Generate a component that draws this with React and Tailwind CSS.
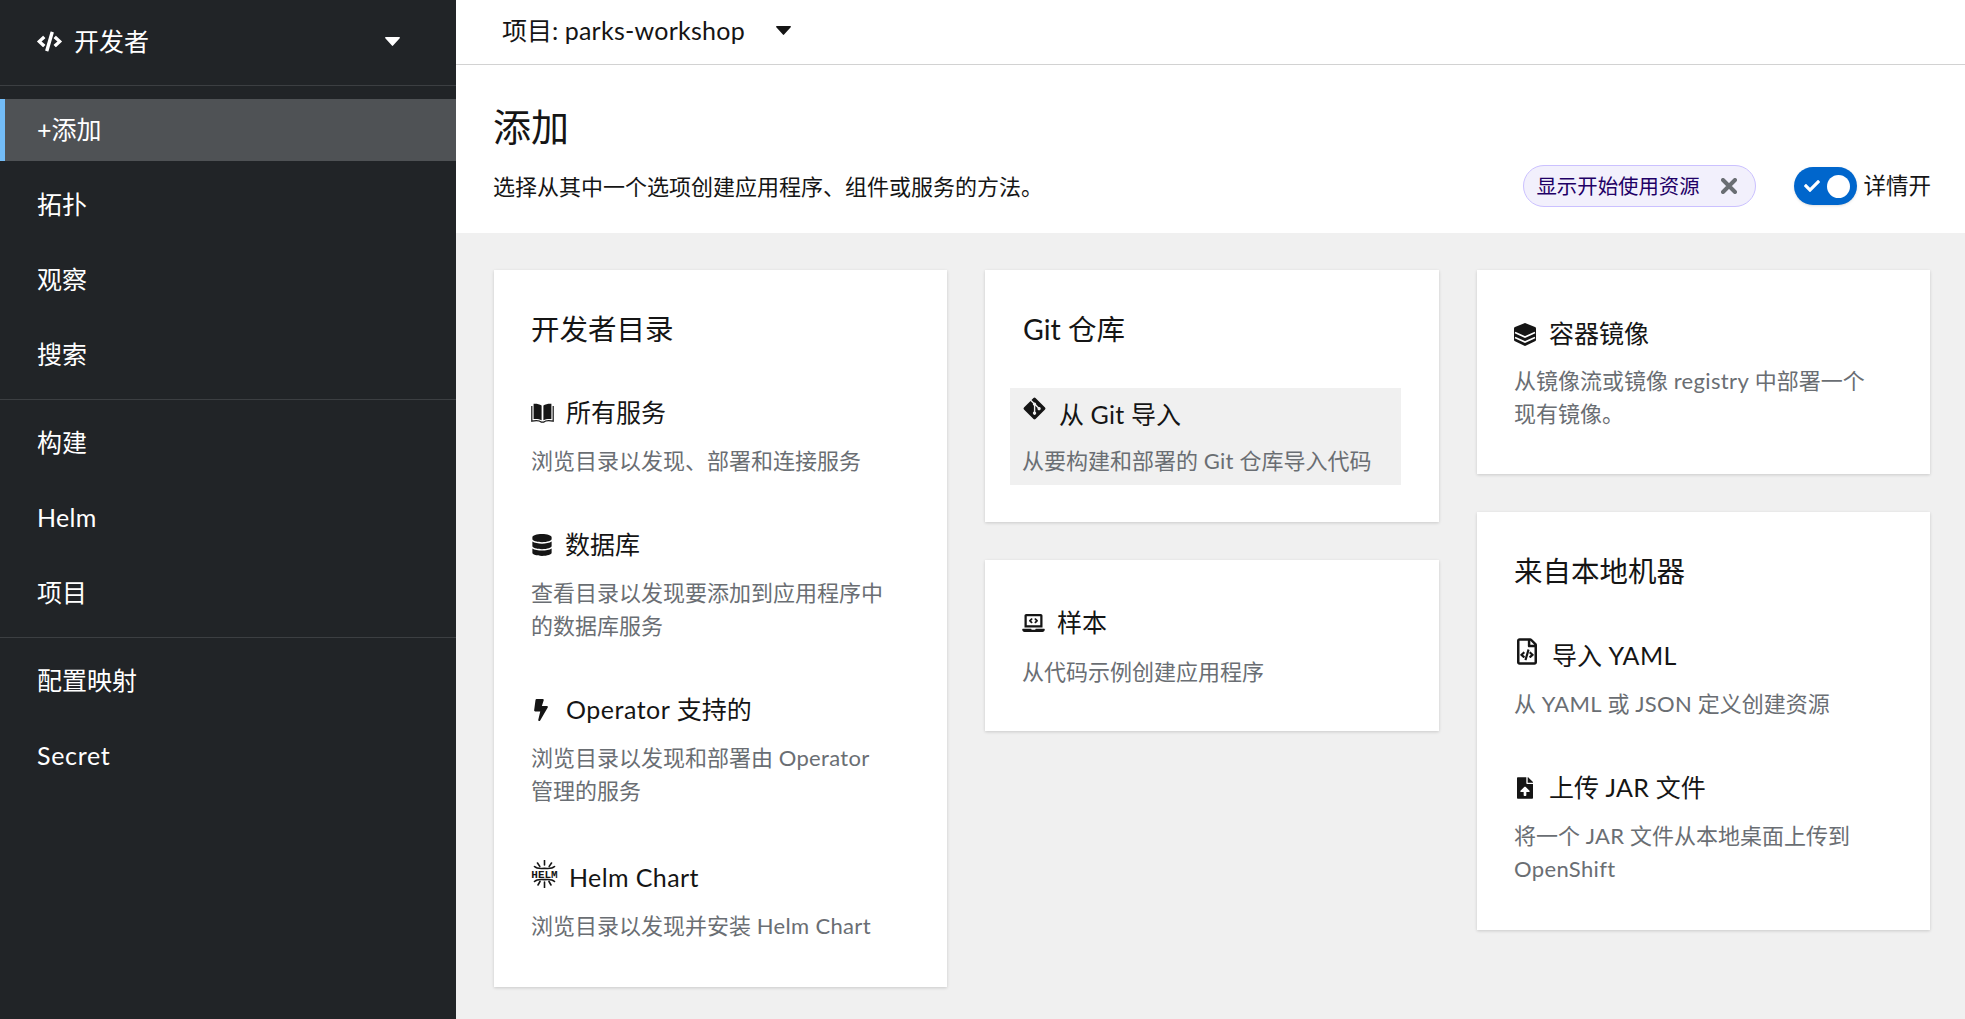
import React from "react";
import { FaCode, FaDatabase, FaBolt, FaGitAlt, FaLaptopCode, FaRegFileCode, FaFileUpload, FaCheck } from "react-icons/fa";

function Caret({ className = "", fill = "#fff" }) {
  return (
    <svg viewBox="0 0 15 9" className={"w-[15px] h-[9px] shrink-0 " + className}>
      <path d="M0.8 0H14.2C14.9 0 15.2 0.8 14.7 1.3L8.1 8.6C7.8 9 7.2 9 6.9 8.6L0.3 1.3C-0.2 0.8 0.1 0 0.8 0Z" fill={fill} />
    </svg>
  );
}

function L({ children, t = "tracking-[0.35px]" }) {
  return <span className={t}>{children}</span>;
}

function NavItem({ children, active }) {
  return (
    <div className={"h-[62px] mb-[13px] flex items-center text-[25px] text-white pl-[37px] " + (active ? "bg-[#4f5255] border-l-[5px] border-[#73bcf7] !pl-[32px]" : "")}>
      {children}
    </div>
  );
}

function HelmIcon() {
  return (
    <svg viewBox="0 0 27 28" className="w-[27px] h-[28px]">
      <g stroke="#151515" strokeWidth="1.6" fill="none" strokeLinecap="round">
        <path d="M13.5 0.5V5M6.5 3L8.8 6.4M20.5 3L18.2 6.4M3.5 6.5C6 9 8 8.4 13.5 8.4C19 8.4 21 9 23.5 6.5" />
        <path d="M3.5 21.5C6 19 8 19.6 13.5 19.6C19 19.6 21 19 23.5 21.5M13.5 22V27.5M7 25L9 21.5M20 25L18 21.5" />
      </g>
      <text x="13.5" y="17.6" textAnchor="middle" fontSize="11" fontWeight="700" fontFamily="'Liberation Mono', monospace" fill="#151515">HELM</text>
    </svg>
  );
}

function LayerIcon() {
  return (
    <svg viewBox="0 0 22 23" className="w-[22px] h-[23px]" fill="#151515">
      <path d="M11 0 L21 4 Q22 4.4 22 5.6 V16.8 Q22 17.8 21 18.3 L11.6 22.8 Q11 23.1 10.4 22.8 L1 18.3 Q0 17.8 0 16.8 V5.6 Q0 4.4 1 4 Z" />
      <path d="M1 9.5 L11 14 L21 9.5" stroke="#fff" strokeWidth="1.7" fill="none" />
      <path d="M1 14.5 L11 19 L21 14.5" stroke="#fff" strokeWidth="1.7" fill="none" />
    </svg>
  );
}

function BookIcon() {
  return (
    <svg viewBox="0 0 23 20" className="w-[23px] h-[20px]" fill="#151515">
      <path d="M10.6 2.6C8.6 1 5 0.4 2.6 0.7V16C5.5 15.7 8.6 16 10.6 17.3Z" />
      <path d="M12.4 2.6C14.4 1 18 0.4 20.4 0.7V16C17.5 15.7 14.4 16 12.4 17.3Z" />
      <path d="M0.8 3V18.2C4 17.5 8.5 17.5 10.5 19.2H12.5C14.5 17.5 19 17.5 22.2 18.2V3" stroke="#151515" strokeWidth="1.2" fill="none" />
    </svg>
  );
}

function Item({ icon, title, gap, top = "mt-[50px]", children, iconClass = "", descMt = "mt-[13px]" }) {
  return (
    <div className={top}>
      <div className={"flex items-center h-[36px] text-[25px] text-[#151515] " + gap}>
        <span className={"flex items-center justify-center shrink-0 " + iconClass}>{icon}</span>
        <span>{title}</span>
      </div>
      <p className={"max-w-[356px] text-[22px] leading-[33px] text-[#6a6e73] " + descMt}>{children}</p>
    </div>
  );
}

function Card({ className = "", children }) {
  return <div className={"bg-white shadow-[0_1px_3px_rgba(3,3,3,0.16)] " + className}>{children}</div>;
}

function Heading({ children, className = "" }) {
  return <h2 className={"h-[40px] flex items-center text-[28.5px] text-[#151515] " + className}>{children}</h2>;
}

export default function App() {
  return (
    <div className="flex h-[1019px] w-[1965px] overflow-hidden bg-white" style={{ fontFamily: "Lato, 'Noto Sans CJK SC', sans-serif" }}>
      <aside className="w-[456px] shrink-0 bg-[#212427] flex flex-col">
        <div className="h-[86px] border-b border-[#3c3f42] flex items-center pl-[37px] pr-[56px] pb-[2px] text-white">
          <FaCode className="w-[25px] h-[25px]" />
          <span className="ml-[12px] text-[25px] flex-1">开发者</span>
          <Caret />
        </div>
        <nav className="pt-[13px] border-b border-[#3c3f42]">
          <NavItem active>+添加</NavItem>
          <NavItem>拓扑</NavItem>
          <NavItem>观察</NavItem>
          <NavItem>搜索</NavItem>
        </nav>
        <nav className="pt-[12px] border-b border-[#3c3f42]">
          <NavItem>构建</NavItem>
          <NavItem><L>Helm</L></NavItem>
          <NavItem>项目</NavItem>
        </nav>
        <nav className="pt-[12px]">
          <NavItem>配置映射</NavItem>
          <NavItem><L t="tracking-[0.7px]">Secret</L></NavItem>
        </nav>
      </aside>

      <main className="flex-1 flex flex-col min-w-0">
        <div className="h-[65px] border-b border-[#d2d2d2] flex items-center pl-[46px] pb-[3px] text-[25px] text-[#151515]">
          <span>项目: <L t="tracking-[0.25px]">parks-workshop</L></span>
          <Caret fill="#151515" className="ml-[31px]" />
        </div>
        <div className="h-[168px] pl-[37px] pr-[34px]">
          <h1 className="pt-[38px] h-[100px] text-[38px] leading-[46px] text-[#151515]">添加</h1>
          <div className="flex items-center justify-between">
            <p className="text-[22px] leading-[33px] text-[#151515]">选择从其中一个选项创建应用程序、组件或服务的方法。</p>
            <div className="flex items-center">
              <div className="h-[42px] w-[233px] rounded-full border border-[#cbc1ff] bg-[#f2f0fc] flex items-center pl-[12px] text-[20.4px] text-[#1f0066]">
                <span>显示开始使用资源</span>
                <svg viewBox="0 0 16 16" className="ml-[21px] w-[16px] h-[16px]">
                  <path d="M2 2L14 14M14 2L2 14" stroke="#6a6e73" strokeWidth="4" strokeLinecap="round" />
                </svg>
              </div>
              <div className="ml-[38px] h-[38px] w-[63px] rounded-full bg-[#0066cc] flex items-center pl-[10px] shadow-sm">
                <FaCheck className="w-[16px] h-[16px] text-white" />
                <span className="ml-[7px] w-[23px] h-[23px] rounded-full bg-white" />
              </div>
              <span className="ml-[6px] text-[22.5px] text-[#151515]">详情开</span>
            </div>
          </div>
        </div>
        <div className="flex-1 bg-[#f0f0f0] pt-[37px] pl-[38px] flex gap-[38px] items-start">
          <div className="w-[453px]">
            <Card className="pt-[39px] pb-[45px] px-[37px]">
              <Heading>开发者目录</Heading>
              <Item top="mt-[46px]" gap="gap-[12px]" title="所有服务" icon={<BookIcon />}>浏览目录以发现、部署和连接服务</Item>
              <Item top="mt-[50px]" gap="gap-[12px]" title="数据库" icon={<FaDatabase className="w-[22px] h-[22px] text-[#151515]" />}>查看目录以发现要添加到应用程序中的数据库服务</Item>
              <Item top="mt-[50px]" gap="gap-[18px]" iconClass="ml-[3px]" title={<><L t="tracking-[0.5px]">Operator</L> 支持的</>} icon={<FaBolt className="w-[14px] h-[22px] text-[#151515]" />}>浏览目录以发现和部署由 <L>Operator</L> 管理的服务</Item>
              <Item top="mt-[53px]" gap="gap-[11px]" iconClass="-mt-[8px]" title={<L t="tracking-[0.4px]">Helm Chart</L>} icon={<HelmIcon />}>浏览目录以发现并安装 <L>Helm Chart</L></Item>
            </Card>
          </div>
          <div className="w-[454px] flex flex-col gap-[38px]">
            <Card className="h-[252px] pt-[39px]">
              <Heading className="pl-[38px]">Git 仓库</Heading>
              <div className="mt-[39px] ml-[25px] w-[391px] h-[97px] bg-[#f0f0f0] px-[12px] pt-[8px]">
                <div className="flex items-start h-[36px] text-[25px] text-[#151515] gap-[12px]">
                  <FaGitAlt className="w-[25px] h-[25px] shrink-0 text-[#151515]" />
                  <span className="leading-[36px]">从 <L>Git</L> 导入</span>
                </div>
                <p className="mt-[13px] text-[22px] leading-[32.5px] text-[#6a6e73] whitespace-nowrap">从要构建和部署的 <L>Git</L> 仓库导入代码</p>
              </div>
            </Card>
            <Card className="h-[171px] pt-[45px] px-[37px]">
              <Item top="mt-0" descMt="mt-[14px]" gap="gap-[12px]" title="样本" icon={<FaLaptopCode className="w-[23px] h-[18px] text-[#151515]" />}>从代码示例创建应用程序</Item>
            </Card>
          </div>
          <div className="w-[453px] flex flex-col gap-[38px]">
            <Card className="h-[204px] pt-[46px] px-[37px]">
              <Item top="mt-0" descMt="mt-[12px]" gap="gap-[13px]" title="容器镜像" icon={<LayerIcon />}>从镜像流或镜像 <L>registry</L> 中部署一个现有镜像。</Item>
            </Card>
            <Card className="h-[418px] pt-[39px] px-[37px]">
              <Heading>来自本地机器</Heading>
              <Item top="mt-[47px]" gap="gap-[15px]" iconClass="ml-[3px] -mt-[10px]" title={<>导入 <L>YAML</L></>} icon={<FaRegFileCode className="w-[20px] h-[27px] text-[#151515]" />}>从 <L>YAML</L> 或 <L>JSON</L> 定义创建资源</Item>
              <Item top="mt-[50px]" gap="gap-[16px]" iconClass="ml-[3px]" title={<>上传 <L>JAR</L> 文件</>} icon={<FaFileUpload className="w-[16px] h-[22px] text-[#151515]" />}>将一个 <L>JAR</L> 文件从本地桌面上传到 <L>OpenShift</L></Item>
            </Card>
          </div>
        </div>
      </main>
    </div>
  );
}
